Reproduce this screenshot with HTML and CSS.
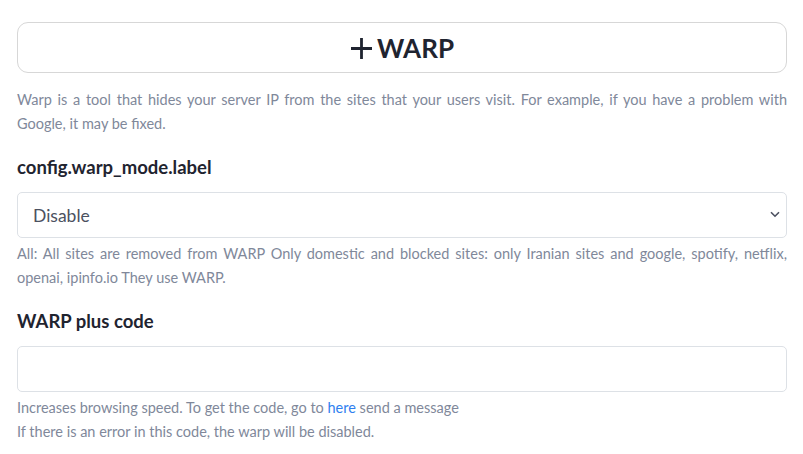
FILE: index.html
```html
<!DOCTYPE html>
<html lang="en">
<head>
<meta charset="utf-8">
<title>WARP</title>
<link rel="stylesheet" href="styles.css">
</head>
<body>
<main class="page">
  <button class="warp-btn" type="button">
    <svg class="plus" width="23" height="23" viewBox="0 0 23 23" aria-hidden="true"><path d="M11.5 1v21M1 11.5h21" stroke="#1f2430" stroke-width="2.8" fill="none"/></svg>
    <span>WARP</span>
  </button>
  <p class="help"><span class="jline">Warp is a tool that hides your server IP from the sites that your users visit. For example, if you have a problem with</span> Google, it may be fixed.</p>

  <label class="field-label" for="mode">config.warp_mode.label</label>
  <div class="select-wrap">
    <select id="mode" class="control select">
      <option>Disable</option>
    </select>
    <svg class="chev" width="10" height="7" viewBox="0 0 10 7" aria-hidden="true"><path d="M1 1.2l4 4 4-4" stroke="#4b5060" stroke-width="1.6" fill="none"/></svg>
  </div>
  <p class="help"><span class="jline">All: All sites are removed from WARP Only domestic and blocked sites: only Iranian sites and google, spotify, netflix,</span> openai, ipinfo.io They use WARP.</p>

  <label class="field-label" for="code">WARP plus code</label>
  <input id="code" class="control" type="text">
  <p class="help plain">Increases browsing speed. To get the code, go to <a href="#">here</a> send a message<br>If there is an error in this code, the warp will be disabled.</p>
</main>
</body>
</html>
```
FILE: styles.css
```css
* { box-sizing: border-box; }
html, body { margin: 0; padding: 0; background: #fff; }
body { font-family: "Lato", "Liberation Sans", sans-serif; }
.page {
  display: flex;
  flex-direction: column;
  padding: 22px 16px 0 17px;
}
.warp-btn {
  height: 51px;
  width: 100%;
  border: 1px solid #d7d7d7;
  border-radius: 11px;
  background: #fff;
  display: flex;
  align-items: center;
  justify-content: center;
  gap: 4px;
  font-family: inherit;
  font-size: 26px;
  font-weight: 700;
  color: #1f2430;
  padding: 0;
  margin: 0 0 15px;
}
.warp-btn .plus { margin-top: 1px; }
.help {
  margin: 0;
  font-size: 14.5px;
  line-height: 24px;
  color: #80889a;
  text-align: justify;
}
.help .jline {
  display: block;
  text-align: justify;
  text-align-last: justify;
}
.help.plain { text-align: left; line-height: 23.5px; }
.help a { color: #2f7fef; text-decoration: none; }
.field-label {
  font-size: 18.5px;
  font-weight: 700;
  line-height: 27px;
  color: #1f2430;
  margin: 18px 0 11px;
}
.control {
  display: block;
  width: 100%;
  height: 46px;
  border: 1px solid #dde1e6;
  border-radius: 5px;
  background: #fff;
  font-family: inherit;
  font-size: 17.5px;
  color: #4b5160;
  padding: 0 15px;
  margin: 0 0 4px;
  outline: none;
}
.select-wrap { position: relative; }
.select { appearance: none; -webkit-appearance: none; }
.chev {
  position: absolute;
  right: 7px;
  top: 19px;
}
```
